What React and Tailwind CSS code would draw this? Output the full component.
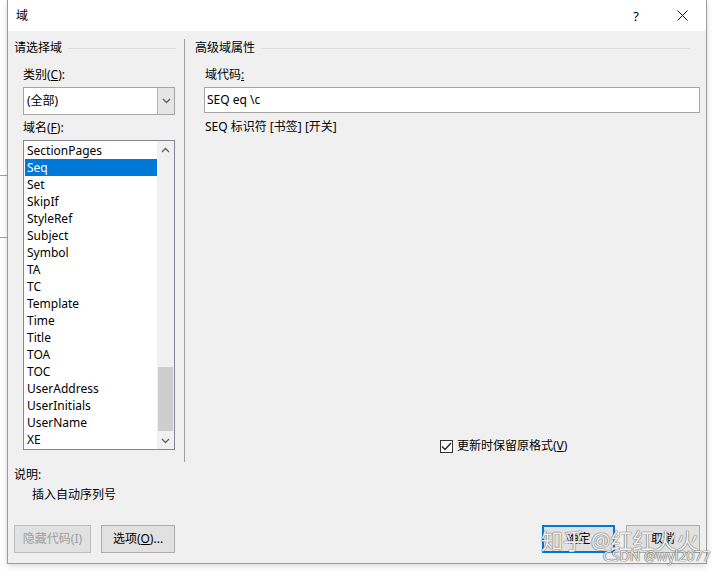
import React from 'react'

const font = { fontFamily: "'Noto Sans','Noto Sans CJK SC',sans-serif" }

const fields = [
  'SectionPages', 'Seq', 'Set', 'SkipIf', 'StyleRef', 'Subject', 'Symbol', 'TA', 'TC',
  'Template', 'Time', 'Title', 'TOA', 'TOC', 'UserAddress', 'UserInitials', 'UserName', 'XE',
]

function Chevron({ up }) {
  return (
    <svg width="9" height="6" viewBox="0 0 9 6" fill="none" stroke="#606060" strokeWidth="1.3">
      {up ? <path d="M1 5 L4.5 1.5 L8 5" /> : <path d="M1 1 L4.5 4.5 L8 1" />}
    </svg>
  )
}

function GroupHeader({ title, lineClass }) {
  return (
    <div className="mt-[9px] h-4 flex items-center">
      <span>{title}</span>
      <div className={`flex-1 h-px bg-[#dcdcdc] ml-[6px] ${lineClass}`} />
    </div>
  )
}

function Button({ children, className = '' }) {
  return (
    <div className={`h-[28px] flex items-center justify-center border border-[#adadad] bg-[#e1e1e1] ${className}`}>
      {children}
    </div>
  )
}

export default function App() {
  return (
    <div className="w-[714px] h-[572px] bg-white flex text-[12px] leading-4 text-black relative overflow-hidden" style={font}>
      {/* background app peeking at left */}
      <div className="w-[7px] flex flex-col">
        <div className="mt-[175px] h-px bg-[#a0a0a0]" />
        <div className="mt-[61px] h-px bg-[#a0a0a0]" />
      </div>

      <div className="w-[700px] h-[564px] flex flex-col border-l border-r border-b border-[#9a9a9a] shadow-[0_2px_6px_rgba(0,0,0,0.15)]">
        {/* title bar */}
        <div className="h-[31px] bg-white flex items-center shrink-0">
          <span className="pl-[8px]">域</span>
          <div className="flex-1" />
          <span className="text-[13px] mr-[38px]">?</span>
          <svg width="11" height="11" viewBox="0 0 11 11" stroke="#111" strokeWidth="1" className="mr-[18px]">
            <path d="M0.5 0.5 L10.5 10.5 M10.5 0.5 L0.5 10.5" />
          </svg>
        </div>

        <div className="flex-1 bg-[#f0f0f0] flex flex-col">
          {/* top row */}
          <div className="h-[431px] flex shrink-0">
            {/* left column */}
            <div className="w-[176px] pl-[6px] flex flex-col">
              <GroupHeader title="请选择域" lineClass="mr-[8px]" />
              <div className="pl-[9px] flex flex-col">
                <div className="mt-[11px] h-4">类别(<span className="underline">C</span>):</div>
                <div className="mt-[4px] w-[152px] h-[28px] bg-white border border-[#a6a6a6] flex">
                  <div className="flex-1 flex items-center pl-[3px]">(全部)</div>
                  <div className="w-[17px] bg-[#e5e5e5] border-l border-[#b4b4b4] flex items-center justify-center">
                    <Chevron />
                  </div>
                </div>
                <div className="mt-[5px] h-4">域名(<span className="underline">F</span>):</div>
                <div className="mt-[4px] w-[152px] h-[310px] bg-white border border-[#828790] flex">
                  <div className="flex-1 pt-px pl-px">
                    {fields.map((f) => (
                      <div
                        key={f}
                        className={`h-[17px] leading-[17px] pl-[2px] ${f === 'Seq' ? 'bg-[#0078d7] text-white' : ''}`}
                      >
                        {f}
                      </div>
                    ))}
                  </div>
                  <div className="w-[17px] bg-[#f0f0f0] flex flex-col">
                    <div className="h-[17px] flex items-center justify-center"><Chevron up /></div>
                    <div className="flex-1 flex flex-col px-px">
                      <div className="flex-1" />
                      <div className="h-[64px] bg-[#cdcdcd] mb-[1px]" />
                    </div>
                    <div className="h-[17px] flex items-center justify-center"><Chevron /></div>
                  </div>
                </div>
              </div>
            </div>

            {/* divider */}
            <div className="w-px mt-[8px] bg-[#a0a0a0]" />

            {/* right column */}
            <div className="flex-1 pl-[10px] flex flex-col">
              <GroupHeader title="高级域属性" lineClass="mr-[16px]" />
              <div className="pl-[10px] flex flex-col flex-1">
                <div className="mt-[11px] h-4">域代码<span className="underline">:</span></div>
                <div className="mt-[4px] -ml-px w-[496px] h-[26px] bg-white border border-[#a6a6a6] flex items-center pl-[2px]">
                  SEQ eq \c
                </div>
                <div className="mt-[6px] h-4">SEQ 标识符 [书签] [开关]</div>
                <div className="flex-1" />
                <div className="mb-[8px] h-4 flex items-center pl-[235px]">
                  <div className="w-[13px] h-[13px] border border-[#333] bg-white flex items-center justify-center">
                    <svg width="11" height="9" viewBox="0 0 11 9" fill="none" stroke="#222" strokeWidth="1.3">
                      <path d="M1 4.5 L4 7.5 L10 1" />
                    </svg>
                  </div>
                  <span className="ml-[4px]">更新时保留原格式(<span className="underline">V</span>)</span>
                </div>
              </div>
            </div>
          </div>

          {/* bottom part */}
          <div className="flex-1 flex flex-col pl-[6px]">
            <div className="mt-[5px] h-4">说明:</div>
            <div className="mt-[4px] h-4 pl-[18px]">插入自动序列号</div>
            <div className="mt-[22px] flex">
              <Button className="w-[77px] bg-[#cccccc] border-[#bfbfbf] text-[#a0a0a0]">隐藏代码(I)</Button>
              <Button className="w-[74px] ml-[10px]">选项(<span className="underline">O</span>)...</Button>
              <div className="flex-1" />
              <div className="w-[73px] h-[28px] flex items-center justify-center border-2 border-[#0078d7] bg-[#e1e1e1]">确定</div>
              <Button className="w-[74px] ml-[11px] mr-[6px]">取消</Button>
            </div>
          </div>
        </div>
      </div>

      {/* watermarks over the dialog */}
      <div className="absolute left-[541px] top-[527px] text-[22px] leading-[26px] text-white/90 [text-shadow:0_0_1px_#555,0_0_1px_#555] pointer-events-none">
        知乎 @红红火火
      </div>
      <div className="absolute left-[603px] top-[548px] text-[14px] leading-4 text-[#ececec] [text-shadow:0_0_1px_#444,0_0_1px_#444] pointer-events-none">
        CSDN @wyl2077
      </div>
    </div>
  )
}
